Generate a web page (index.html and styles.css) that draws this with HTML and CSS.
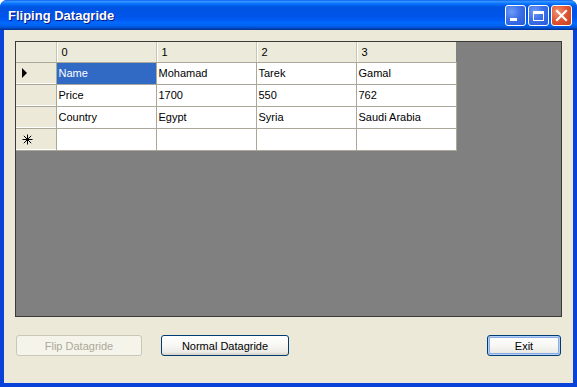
FILE: index.html
```html
<!DOCTYPE html>
<html>
<head>
<meta charset="utf-8">
<link rel="stylesheet" href="styles.css">
</head>
<body>
<div class="window">
  <div class="titlebar">
    <span class="title">Fliping Datagride</span>
    <div class="tbuttons">
      <div class="tbtn min"><span class="bar"></span></div>
      <div class="tbtn max"><span class="box"></span></div>
      <div class="tbtn close">
        <svg width="13" height="13" viewBox="0 0 13 13"><path d="M2 2 L11 11 M11 2 L2 11" stroke="#fff" stroke-width="2.2" stroke-linecap="square"/></svg>
      </div>
    </div>
  </div>
  <div class="client">
    <div class="grid">
      <table class="dg">
        <tr class="hdr">
          <th class="rh"></th><th>0</th><th>1</th><th>2</th><th>3</th>
        </tr>
        <tr>
          <td class="rh"><svg width="8" height="10" viewBox="0 0 8 10"><path d="M1 0 L6 5 L1 10 Z" fill="#000"/></svg></td>
          <td class="sel">Name</td><td>Mohamad</td><td>Tarek</td><td>Gamal</td>
        </tr>
        <tr>
          <td class="rh"></td><td>Price</td><td>1700</td><td>550</td><td>762</td>
        </tr>
        <tr>
          <td class="rh"></td><td>Country</td><td>Egypt</td><td>Syria</td><td>Saudi Arabia</td>
        </tr>
        <tr>
          <td class="rh star"><svg width="11" height="11" viewBox="0 0 11 11"><path d="M5.5 0.5 V10.5 M0.5 5.5 H10.5 M1.8 1.8 L9.2 9.2 M9.2 1.8 L1.8 9.2" stroke="#000" stroke-width="1"/></svg></td>
          <td></td><td></td><td></td><td></td>
        </tr>
      </table>
    </div>
    <div class="actions">
      <button class="btn disabled">Flip Datagride</button>
      <button class="btn normal">Normal Datagride</button>
      <span class="spacer"></span>
      <button class="btn exit">Exit</button>
    </div>
  </div>
</div>
</body>
</html>
```
FILE: styles.css
```css
html, body {
  margin: 0;
  padding: 0;
  background: #ffffff;
}
body {
  font-family: "Liberation Sans", Arial, sans-serif;
  font-size: 11px;
}
.window {
  width: 577px;
  height: 387px;
  box-sizing: border-box;
  display: flex;
  flex-direction: column;
  background: #0842D9;
  border-radius: 7px 7px 0 0;
  overflow: hidden;
}
.titlebar {
  height: 30px;
  flex: none;
  display: flex;
  align-items: center;
  padding: 0 5px 0 8px;
  background: linear-gradient(to bottom,
    #0058EE 0%, #3A93FF 4%, #288EFF 7%, #127DFF 10%, #036FFC 14%,
    #0262EE 18%, #0057E5 22%, #0054E3 28%, #0055EB 56%, #005BF5 66%,
    #026AFE 76%, #0062EF 86%, #0052D6 92%, #0040AB 96%, #003092 100%);
}
.title {
  color: #fff;
  font-family: "Liberation Sans", Arial, sans-serif;
  font-weight: bold;
  font-size: 13px;
  text-shadow: 1px 1px 0 #0A1883;
  flex: 1;
  margin-top: 1px;
}
.tbuttons {
  display: flex;
  gap: 2px;
  margin-top: 1px;
}
.tbtn {
  width: 21px;
  height: 21px;
  box-sizing: border-box;
  border: 1px solid #fff;
  border-radius: 3px;
  position: relative;
  display: flex;
  align-items: center;
  justify-content: center;
}
.min, .max {
  background: radial-gradient(circle at 30% 30%, #6F9BF7 0%, #3D71E8 45%, #2559D8 100%);
}
.close {
  background: radial-gradient(circle at 30% 30%, #F09070 0%, #E0542F 50%, #C8401E 100%);
}
.min .bar {
  position: absolute;
  left: 4px;
  bottom: 4px;
  width: 7px;
  height: 3px;
  background: #fff;
}
.max .box {
  width: 11px;
  height: 10px;
  box-sizing: border-box;
  border: 1px solid #fff;
  border-top-width: 3px;
}
.client {
  flex: 1;
  margin: 0 4px 4px 4px;
  background: #ECE9D8;
  padding: 11px 11px 0 11px;
  display: flex;
  flex-direction: column;
}
.grid {
  height: 276px;
  box-sizing: border-box;
  border: 1px solid #3a3a3a;
  background: #808080;
  padding: 0;
}
.dg {
  border-collapse: collapse;
  border-spacing: 0;
  table-layout: fixed;
}
.dg th, .dg td {
  padding: 0 0 0 2px;
  text-align: left;
  font-weight: normal;
  white-space: nowrap;
  overflow: hidden;
  box-sizing: border-box;
  color: #000;
}
.dg th {
  height: 20px;
  width: 100px;
  background: #EBEADB;
  border-bottom: 1px solid #ACA899;
  border-left: 1px solid #C7C5B2;
  padding-left: 5px;
  padding-top: 1px;
  box-shadow: inset 1px 0 0 #fff;
}
.dg th.rh {
  width: 40px;
  border-left: none;
  box-shadow: none;
}
.dg td {
  height: 22px;
  width: 100px;
  background: #fff;
  border: 1px solid #ACA899;
  border-top: none;
  padding-left: 2px;
}
.dg td.rh {
  width: 40px;
  background: #ECE9D8;
  border-left: none;
  border-right: 1px solid #ACA899;
  border-bottom: 1px solid #ACA899;
  box-shadow: inset 0 -1px 0 #fff;
  padding-left: 5px;
  vertical-align: middle;
}
.dg td.rh svg {
  display: block;
}
.dg td.star {
  padding-left: 6px;
}
.dg td.sel {
  background: #316AC5;
  color: #fff;
}
.actions {
  display: flex;
  align-items: center;
  margin-top: 18px;
  padding-left: 1px;
}
.btn {
  height: 21px;
  box-sizing: border-box;
  font-family: "Liberation Sans", Arial, sans-serif;
  font-size: 11px;
  padding: 0;
  border-radius: 3px;
  border: 1px solid #003C74;
  background: linear-gradient(to bottom, #FFFFFF 0%, #F7F7F4 50%, #ECEBE6 85%, #D6D0C5 100%);
  color: #000;
}
.btn.disabled {
  width: 126px;
  border-color: #C9C7BA;
  background: #F5F4EA;
  color: #ACA899;
}
.btn.normal {
  width: 128px;
  margin-left: 19px;
}
.btn.exit {
  width: 74px;
  margin-right: 1px;
  box-shadow: inset 0 0 0 1px #B5CFF5, inset 0 0 0 2px #89ADE4;
}
.spacer {
  flex: 1;
}
```
